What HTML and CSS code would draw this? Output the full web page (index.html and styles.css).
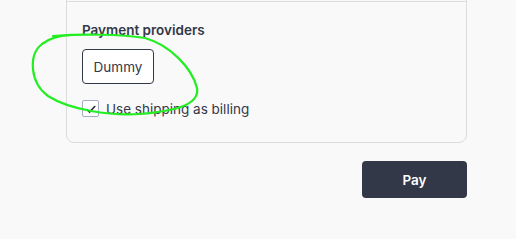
FILE: index.html
```html
<!DOCTYPE html>
<html lang="en">
<head>
    <meta charset="UTF-8">
    <title>Checkout</title>
    <link rel="stylesheet" href="styles.css">
</head>
<body>
    <div class="checkout">
        <div class="card">
            <div class="card-top"></div>
            <div class="payment">
                <h3>Payment providers</h3>
                <div class="providers">
                    <button class="provider">Dummy</button>
                </div>
                <label class="check">
                    <span class="box">
                        <svg width="12" height="10" viewBox="0 0 12 10"><path d="M1.8 5.4 L4.6 8 L10.2 2" fill="none" stroke="#2b2f3a" stroke-width="1.6"/></svg>
                    </span>
                    Use shipping as billing
                </label>
            </div>
        </div>
        <div class="actions">
            <button class="pay">Pay</button>
        </div>
    </div>
    <svg class="scribble" width="516" height="239" viewBox="0 0 516 239">
        <path d="M53 36 C80 34, 120 34, 145 38 C170 45, 192 68, 197 88 C200 105, 175 111, 140 114 C110 116, 70 110, 48 96 C30 83, 28 55, 42 44 C50 38, 58 36, 72 35" fill="none" stroke="#22ee22" stroke-width="2.2" stroke-linecap="round"/>
    </svg>
</body>
</html>
```

FILE: styles.css
```css
body {
    margin: 0;
    background-color: #f9f9f9;
    font-family: Inter, "Noto Sans", sans-serif;
    color: #333848;
}
.checkout {
    width: 401px;
    margin-left: 66px;
    margin-top: -22px;
}
.card {
    border: 1px solid #dcdcdc;
    border-radius: 8px;
}
.card-top {
    height: 22px;
}
.payment {
    border-top: 1px solid #dcdcdc;
    padding: 19px 15px 25px;
}
.payment h3 {
    margin: 0;
    font-size: 13.5px;
    font-weight: 600;
    line-height: 18px;
}
.providers {
    margin-top: 10px;
}
.provider {
    font-family: inherit;
    font-size: 13.5px;
    color: #333848;
    background-color: #fff;
    border: 1px solid #333848;
    border-radius: 4px;
    width: 72px;
    height: 35px;
    padding: 0;
}
.check {
    display: flex;
    align-items: center;
    gap: 7px;
    margin-top: 16px;
    font-size: 13.5px;
}
.box {
    width: 15px;
    height: 15px;
    border: 1px solid #a6adc2;
    border-radius: 2px;
    background-color: #fff;
    display: flex;
    align-items: center;
    justify-content: center;
}
.actions {
    display: flex;
    justify-content: flex-end;
    margin-top: 18px;
}
.pay {
    font-family: inherit;
    font-size: 13.5px;
    font-weight: 600;
    color: #fff;
    background-color: #333848;
    border: none;
    border-radius: 4px;
    width: 105px;
    height: 37px;
}
.scribble {
    position: absolute;
    left: 0;
    top: 0;
    pointer-events: none;
}
```
